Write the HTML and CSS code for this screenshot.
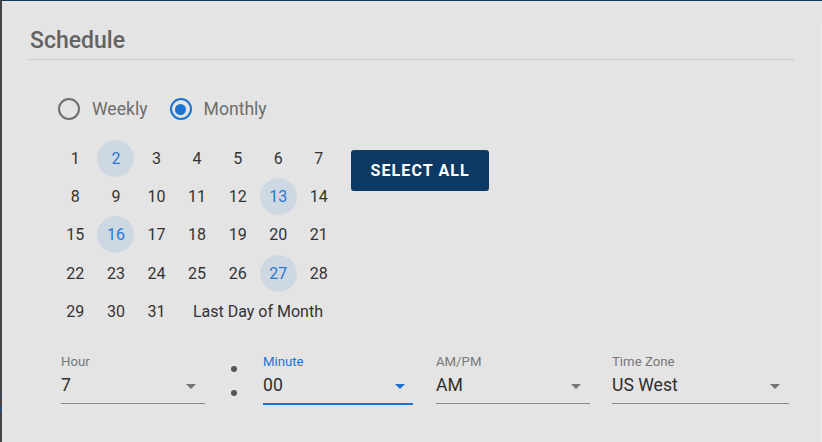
FILE: index.html
```html
<!DOCTYPE html>
<html lang="en">
<head>
<meta charset="utf-8">
<title>Schedule</title>
<link rel="stylesheet" href="styles.css">
</head>
<body>
<div class="screen">
  <div class="edge-left"></div>
  <div class="main">
    <section class="dialog">
      <h2 class="title">Schedule</h2>
      <div class="radios">
        <label class="radio"><span class="dot"></span><span>Weekly</span></label>
        <label class="radio"><span class="dot on"></span><span>Monthly</span></label>
      </div>
      <div class="days-row">
        <div class="days">
          <div class="day"><span>1</span></div>
          <div class="day sel"><span>2</span></div>
          <div class="day"><span>3</span></div>
          <div class="day"><span>4</span></div>
          <div class="day"><span>5</span></div>
          <div class="day"><span>6</span></div>
          <div class="day"><span>7</span></div>
          <div class="day"><span>8</span></div>
          <div class="day"><span>9</span></div>
          <div class="day"><span>10</span></div>
          <div class="day"><span>11</span></div>
          <div class="day"><span>12</span></div>
          <div class="day sel"><span>13</span></div>
          <div class="day"><span>14</span></div>
          <div class="day"><span>15</span></div>
          <div class="day sel"><span>16</span></div>
          <div class="day"><span>17</span></div>
          <div class="day"><span>18</span></div>
          <div class="day"><span>19</span></div>
          <div class="day"><span>20</span></div>
          <div class="day"><span>21</span></div>
          <div class="day"><span>22</span></div>
          <div class="day"><span>23</span></div>
          <div class="day"><span>24</span></div>
          <div class="day"><span>25</span></div>
          <div class="day"><span>26</span></div>
          <div class="day sel"><span>27</span></div>
          <div class="day"><span>28</span></div>
          <div class="day"><span>29</span></div>
          <div class="day"><span>30</span></div>
          <div class="day"><span>31</span></div>
          <div class="day last"><span>Last Day of Month</span></div>
        </div>
        <button class="select-all" type="button">SELECT ALL</button>
      </div>
      <div class="fields">
        <div class="field f-hour">
          <div class="label">Hour</div>
          <div class="control"><span>7</span><span class="caret"></span></div>
        </div>
        <div class="colon"><span class="c-dot"></span><span class="c-dot"></span></div>
        <div class="field f-min">
          <div class="label">Minute</div>
          <div class="control"><span>00</span><span class="caret"></span></div>
        </div>
        <div class="field f-ampm">
          <div class="label">AM/PM</div>
          <div class="control"><span>AM</span><span class="caret"></span></div>
        </div>
        <div class="field f-tz">
          <div class="label">Time Zone</div>
          <div class="control"><span>US West</span><span class="caret"></span></div>
        </div>
      </div>
    </section>
    <div class="edge-right"></div>
  </div>
</div>
</body>
</html>
```
FILE: styles.css
```css
* { box-sizing: border-box; }

body {
  margin: 0;
  width: 822px;
  height: 442px;
  overflow: hidden;
  background: #e4e4e4;
  font-family: Roboto, "Liberation Sans", sans-serif;
}

.screen {
  display: flex;
  height: 442px;
}

.edge-left {
  width: 2px;
  background: linear-gradient(to bottom,
    #434343 0 393px, #34475a 393px 396px,
    #434343 396px 407px, #1f5483 407px 411px,
    #434343 411px);
}

.main {
  flex: 1;
  display: flex;
  border-top: 1px solid #0d3a63;
}

.dialog {
  flex: 1;
  padding: 26px 27px 0 27px;
}

.edge-right {
  width: 1px;
  margin-top: 22px;
  background: #eeeeee;
}

.title {
  margin: 0;
  padding: 0 0 5px 1px;
  font-size: 23px;
  font-weight: 500;
  line-height: 27px;
  color: #636363;
  border-bottom: 1px solid #c8c8c8;
}

.radios {
  display: flex;
  align-items: center;
  height: 24px;
  margin-top: 37px;
  padding-left: 29px;
}

.radio {
  display: flex;
  align-items: center;
  gap: 12px;
  font-size: 17.6px;
  color: #6d6d6d;
}

.radio + .radio { margin-left: 22px; }

.dot {
  width: 22px;
  height: 22px;
  border: 2px solid #6f6f6f;
  border-radius: 50%;
  display: flex;
  align-items: center;
  justify-content: center;
}

.dot.on { border-color: #1b74d2; }

.dot.on::after {
  content: "";
  width: 11px;
  height: 11px;
  border-radius: 50%;
  background: #1b74d2;
}

.days-row {
  display: flex;
  align-items: flex-start;
  margin-top: 18px;
  padding-left: 26px;
}

.days {
  display: grid;
  grid-template-columns: repeat(7, 40.6px);
  grid-auto-rows: 38.3px;
}

.day {
  display: flex;
  align-items: center;
  justify-content: center;
  font-size: 16px;
  color: #333333;
}

.day span {
  display: flex;
  align-items: center;
  justify-content: center;
  width: 37px;
  height: 37px;
  border-radius: 50%;
}

.day.sel span {
  background: #cdd8e3;
  color: #2a78cf;
}

.day.last { grid-column: span 4; }

.day.last span {
  width: auto;
  white-space: nowrap;
}

.select-all {
  margin: 11px 0 0 12px;
  width: 138px;
  height: 41px;
  padding: 0;
  border: 0;
  border-radius: 3px;
  background: #0c3a64;
  color: #ffffff;
  font-family: Roboto, "Liberation Sans", sans-serif;
  font-size: 16px;
  font-weight: 700;
  letter-spacing: 1.1px;
}

.fields {
  display: flex;
  margin-top: 23.5px;
  padding-left: 32px;
}

.field {
  display: flex;
  flex-direction: column;
}

.f-hour { width: 144px; }
.f-min { width: 150px; margin-right: 23px; }
.f-ampm { width: 154px; margin-right: 22px; }
.f-tz { width: 177px; }

.label {
  font-size: 13.2px;
  line-height: 15px;
  color: #777777;
}

.f-min .label { color: #1b74d2; }

.control {
  display: flex;
  align-items: center;
  justify-content: space-between;
  height: 29px;
  margin-top: 6px;
  padding-bottom: 8px;
  border-bottom: 1px solid #8a8a8a;
  font-size: 17.6px;
  line-height: 20px;
  color: #2e2e2e;
}

.f-min .control { border-bottom: 2px solid #1b74d2; height: 30px; }

.caret {
  width: 0;
  height: 0;
  margin-top: 4px;
  margin-right: 9px;
  border-left: 5px solid transparent;
  border-right: 5px solid transparent;
  border-top: 5px solid #757575;
}

.f-min .caret {
  margin-right: 8px;
  border-top-color: #1b74d2;
}

.colon {
  width: 58px;
  display: flex;
  flex-direction: column;
  align-items: center;
  padding-top: 11.7px;
  gap: 18.3px;
}

.c-dot {
  width: 6px;
  height: 6px;
  border-radius: 50%;
  background: #555555;
}
```
